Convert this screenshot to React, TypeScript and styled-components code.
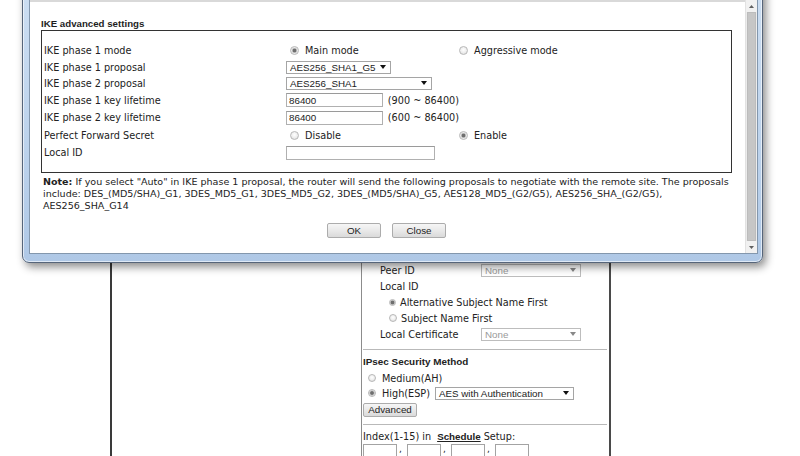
import React from "react";
import styled, { createGlobalStyle } from "styled-components";

const verdana = `"DejaVu Sans", Verdana, sans-serif`;
const arial = `"Liberation Sans", Arial, sans-serif`;

const GlobalStyle = createGlobalStyle`
  *, *::before, *::after { box-sizing: border-box; }
  html, body { margin: 0; padding: 0; background: #fff; }
  body { width: 800px; height: 456px; overflow: hidden; }
`;

const Page = styled.div`
  position: relative;
  width: 800px;
  height: 456px;
  overflow: hidden;
  background: #fff;
  font-family: ${verdana};
  font-size: 9.7px;
  color: #222;
`;

/* ---------- page behind the dialog ---------- */

const BackTable = styled.div`
  display: flex;
  height: 456px;
  margin-left: 110px;
`;

const BlankCell = styled.div`
  width: 251px;
  border-left: 2px solid #3a3a3a;
`;

const InfoCell = styled.div`
  width: 250px;
  border-left: 1px solid #8c8c8c;
  border-right: 2px solid #4a4a4a;
  padding: 262px 2px 0 1px;
  display: flex;
  flex-direction: column;

  & > * {
    flex: none;
  }
`;

const FieldRow = styled.div`
  display: grid;
  grid-template-columns: 101px 100px;
  align-items: center;
  height: 16px;
  padding-left: 17px;
`;

const RadioRow = styled.div<{ $indent: number; $h?: number; $top?: number }>`
  display: flex;
  align-items: center;
  gap: ${(p) => (p.$indent > 10 ? 4 : 6)}px;
  height: ${(p) => p.$h ?? 16}px;
  margin-top: ${(p) => p.$top ?? 0}px;
  padding-left: ${(p) => p.$indent}px;
  white-space: nowrap;
`;

const Divider = styled.div`
  height: 1px;
  margin-top: 7px;
  background: #b9b9b9;
`;

const MethodTitle = styled.div`
  margin-top: 5px;
  height: 14px;
  line-height: 14px;
  font-family: ${arial};
  font-weight: bold;
  font-size: 9.9px;
  color: #222;
`;

const EspSelectWrap = styled.span`
  margin-left: -1px;
`;

const SmallButton = styled.button<{ $w: number; $h: number }>`
  width: ${(p) => p.$w}px;
  height: ${(p) => p.$h}px;
  padding: 0;
  border: 1px solid #acacac;
  border-radius: 2px;
  background: linear-gradient(180deg, #f6f6f6 0%, #e9e9e9 50%, #dadada 100%);
  font-family: ${arial};
  font-size: 9.8px;
  color: #222;
  line-height: 1;
`;

const AdvancedWrap = styled.div`
  margin-top: 3px;
  display: flex;
`;

const IndexRow = styled.div`
  margin-top: 4px;
  height: 14px;
  display: flex;
  align-items: center;
  white-space: nowrap;
`;

const ScheduleLink = styled.span`
  margin-left: 6px;
  margin-right: 3px;
  font-family: ${arial};
  font-weight: bold;
  font-size: 9.8px;
  text-decoration: underline;
`;

const ScheduleInputs = styled.div`
  margin-top: 1px;
  display: flex;
  align-items: flex-start;
  gap: 1px;
`;

const ScheduleBox = styled.div`
  width: 34px;
  height: 16px;
  border: 1px solid #a3a3a3;
  border-bottom: none;
`;

const Comma = styled.span`
  width: 8px;
  margin-top: 1px;
  font-size: 9px;
  line-height: 9px;
  padding-left: 1px;
`;

/* ---------- shared form bits ---------- */

const Radio = styled.span<{ $checked?: boolean; $size?: number }>`
  display: inline-block;
  flex: none;
  width: ${(p) => p.$size ?? 9}px;
  height: ${(p) => p.$size ?? 9}px;
  border-radius: 50%;
  border: 1px solid #b8b8b8;
  background: ${(p) =>
    p.$checked
      ? "radial-gradient(circle, #6e6e6e 0 1.4px, #b9b9b9 2.1px, #e9e9e9 3px, #f7f7f7 100%)"
      : "radial-gradient(circle at 50% 40%, #ffffff 0, #ededed 55%, #d4d4d4 100%)"};
`;

const SelectBox = styled.span<{ $w: number; $muted?: boolean }>`
  display: inline-flex;
  align-items: center;
  justify-content: space-between;
  width: ${(p) => p.$w}px;
  height: 13px;
  padding: 0 4px 0 3px;
  border: 1px solid ${(p) => (p.$muted ? "#bdbdbd" : "#a5a5a5")};
  background: #fff;
  font-family: ${arial};
  font-size: 9.8px;
  color: ${(p) => (p.$muted ? "#9a9a9a" : "#222")};
  white-space: nowrap;
`;

const TextBox = styled.span<{ $w: number }>`
  display: inline-flex;
  align-items: center;
  width: ${(p) => p.$w}px;
  height: 14px;
  padding-left: 2px;
  border: 1px solid #b0b0b0;
  border-top-color: #9a9a9a;
  background: #fff;
  font-family: ${arial};
  font-size: 9.8px;
  color: #222;
`;

const Caret = ({ color = "#111" }: { color?: string }) => (
  <svg width="6" height="4" viewBox="0 0 6 4">
    <path d="M0 0h6L3 4z" fill={color} />
  </svg>
);

const Select = ({ w, value, muted }: { w: number; value: string; muted?: boolean }) => (
  <SelectBox $w={w} $muted={muted}>
    <span>{value}</span>
    <Caret color={muted ? "#888" : "#111"} />
  </SelectBox>
);

/* ---------- dialog ---------- */

const Window = styled.div`
  position: absolute;
  left: 22px;
  top: -40px;
  width: 741px;
  height: 303px;
  display: flex;
  padding: 38px 4px 8px 6px;
  border: 1px solid #56657a;
  border-radius: 7px;
  background: linear-gradient(180deg, #cfe0f3 0%, #bdd3ec 60%, #afc8e6 100%);
  box-shadow: 3px 4px 9px rgba(0, 0, 0, 0.45), inset 0 0 0 1px rgba(255, 255, 255, 0.6);
`;

const Client = styled.div`
  flex: 1;
  min-width: 0;
  display: flex;
  border: 1px solid #8397ad;
  background: #fff;
`;

const Content = styled.div`
  flex: 1;
  min-width: 0;
  overflow: hidden;
  border-top: 2px solid #d9d9d9;
  padding: 0 13px 0 11px;
`;

const SectionTitle = styled.div`
  margin-top: 16px;
  height: 12px;
  line-height: 12px;
  font-family: ${arial};
  font-weight: bold;
  font-size: 9.7px;
  color: #1e1e1e;
`;

const Fieldset = styled.div`
  display: grid;
  grid-template-columns: 242px 173px 1fr;
  grid-template-rows: 17px 16px 16px 18px 17px 18px 17px;
  align-items: center;
  width: 691px;
  padding: 11px 0 11px 2px;
  border: 1px solid #333;
  white-space: nowrap;
`;

const Label = styled.span``;

const Cell = styled.span`
  display: flex;
  align-items: center;
  gap: 5px;
`;

const Option = styled.span<{ $indent?: boolean }>`
  display: inline-flex;
  align-items: center;
  gap: 6px;
  margin-left: ${(p) => (p.$indent ? 4 : 0)}px;
`;

const Note = styled.div`
  margin-top: 3px;
  padding-left: 2px;
  line-height: 12px;
  font-size: 9.55px;
  white-space: nowrap;
  b {
    font-weight: bold;
  }
`;

const ButtonBar = styled.div`
  margin-top: 11px;
  display: flex;
  justify-content: center;
  gap: 11px;
`;

const Scrollbar = styled.div`
  width: 12px;
  flex: none;
  display: flex;
  flex-direction: column;
  background: #ececec;
  border-left: 1px solid #e2e2e2;
`;

const ScrollArrow = styled.div`
  height: 12px;
  display: flex;
  align-items: center;
  justify-content: center;
  background: #f1f1f1;
`;

const ScrollThumb = styled.div`
  flex: 1;
  margin: 0 1px;
  background: #c6c6c6;
  border: 1px solid #bcbcbc;
`;

const Arrow = ({ up }: { up?: boolean }) => (
  <svg width="5" height="3" viewBox="0 0 5 3">
    <path d={up ? "M0 3h5L2.5 0z" : "M0 0h5L2.5 3z"} fill="#606060" />
  </svg>
);

const Dialog = () => (
  <Window>
    <Client>
      <Content>
        <SectionTitle>IKE advanced settings</SectionTitle>
        <Fieldset>
          <Label>IKE phase 1 mode</Label>
          <Cell>
            <Option $indent>
              <Radio $checked />
              Main mode
            </Option>
          </Cell>
          <Cell>
            <Option>
              <Radio />
              Aggressive mode
            </Option>
          </Cell>

          <Label>IKE phase 1 proposal</Label>
          <Cell>
            <Select w={105} value="AES256_SHA1_G5" />
          </Cell>
          <span />

          <Label>IKE phase 2 proposal</Label>
          <Cell>
            <Select w={146} value="AES256_SHA1" />
          </Cell>
          <span />

          <Label>IKE phase 1 key lifetime</Label>
          <Cell>
            <TextBox $w={98}>86400</TextBox>
            (900 ~ 86400)
          </Cell>
          <span />

          <Label>IKE phase 2 key lifetime</Label>
          <Cell>
            <TextBox $w={98}>86400</TextBox>
            (600 ~ 86400)
          </Cell>
          <span />

          <Label>Perfect Forward Secret</Label>
          <Cell>
            <Option $indent>
              <Radio />
              Disable
            </Option>
          </Cell>
          <Cell>
            <Option>
              <Radio $checked />
              Enable
            </Option>
          </Cell>

          <Label>Local ID</Label>
          <Cell>
            <TextBox $w={149} />
          </Cell>
          <span />
        </Fieldset>
        <Note>
          <b>Note:</b> If you select "Auto" in IKE phase 1 proposal, the router will send the following
          proposals to negotiate with the remote site. The proposals
          <br />
          include: DES_(MD5/SHA)_G1, 3DES_MD5_G1, 3DES_MD5_G2, 3DES_(MD5/SHA)_G5, AES128_MD5_(G2/G5),
          AES256_SHA_(G2/G5),
          <br />
          AES256_SHA_G14
        </Note>
        <ButtonBar>
          <SmallButton $w={54} $h={15}>OK</SmallButton>
          <SmallButton $w={54} $h={15}>Close</SmallButton>
        </ButtonBar>
      </Content>
      <Scrollbar>
        <ScrollArrow>
          <Arrow up />
        </ScrollArrow>
        <ScrollThumb />
        <ScrollArrow>
          <Arrow />
        </ScrollArrow>
      </Scrollbar>
    </Client>
  </Window>
);

const App: React.FC = () => (
  <Page>
    <GlobalStyle />
    <BackTable>
      <BlankCell />
      <InfoCell>
        <FieldRow>
          <span>Peer ID</span>
          <Select w={100} value="None" muted />
        </FieldRow>
        <FieldRow>
          <span>Local ID</span>
        </FieldRow>
        <RadioRow $indent={26}>
          <Radio $checked $size={7} />
          Alternative Subject Name First
        </RadioRow>
        <RadioRow $indent={26}>
          <Radio $size={8} />
          Subject Name First
        </RadioRow>
        <FieldRow>
          <span>Local Certificate</span>
          <Select w={100} value="None" muted />
        </FieldRow>
        <Divider />
        <MethodTitle>IPsec Security Method</MethodTitle>
        <RadioRow $indent={5} $top={1}>
          <Radio $size={8} />
          Medium(AH)
        </RadioRow>
        <RadioRow $indent={5} $h={14}>
          <Radio $checked $size={8} />
          High(ESP)
          <EspSelectWrap>
            <Select w={139} value="AES with Authentication" />
          </EspSelectWrap>
        </RadioRow>
        <AdvancedWrap>
          <SmallButton $w={54} $h={14}>Advanced</SmallButton>
        </AdvancedWrap>
        <Divider />
        <IndexRow>
          Index(1-15) in
          <ScheduleLink>Schedule</ScheduleLink>
          Setup:
        </IndexRow>
        <ScheduleInputs>
          <ScheduleBox />
          <Comma>,</Comma>
          <ScheduleBox />
          <Comma>,</Comma>
          <ScheduleBox />
          <Comma>,</Comma>
          <ScheduleBox />
        </ScheduleInputs>
      </InfoCell>
    </BackTable>
    <Dialog />
  </Page>
);

export default App;
